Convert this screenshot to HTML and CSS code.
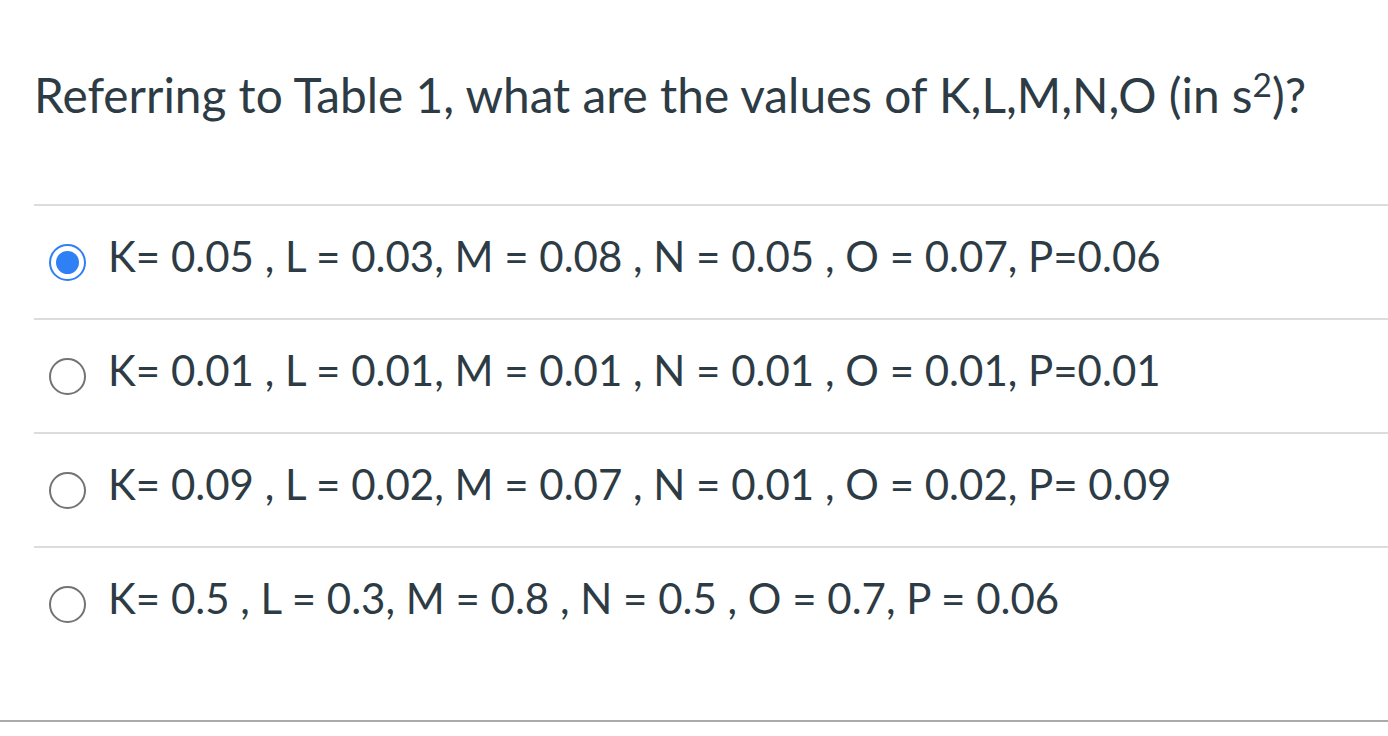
FILE: index.html
```html
<!DOCTYPE html>
<html>
<head>
<meta charset="utf-8">
<link rel="stylesheet" href="styles.css">
</head>
<body>
<div class="question">
  <div class="inner">
    <div class="title">Referring to Table 1, what are the values of K,L,M,N,O (in s<sup>2</sup>)?</div>
    <div class="answers">
      <div class="answer">
        <span class="radio checked"><span class="dot"></span></span>
        <span class="label">K= 0.05 , L = 0.03, M = 0.08 , N = 0.05 , O = 0.07, P=0.06</span>
      </div>
      <div class="answer">
        <span class="radio"></span>
        <span class="label">K= 0.01 , L = 0.01, M = 0.01 , N = 0.01 , O = 0.01, P=0.01</span>
      </div>
      <div class="answer">
        <span class="radio"></span>
        <span class="label">K= 0.09 , L = 0.02, M = 0.07 , N = 0.01 , O = 0.02, P= 0.09</span>
      </div>
      <div class="answer">
        <span class="radio"></span>
        <span class="label">K= 0.5 , L = 0.3, M = 0.8 , N = 0.5 , O = 0.7, P = 0.06</span>
      </div>
    </div>
  </div>
</div>
</body>
</html>
```
FILE: styles.css
```css
html, body {
  margin: 0;
  padding: 0;
  background: #fff;
}
body {
  font-family: Lato, "Noto Sans", sans-serif;
  color: #2d3b45;
}
.question {
  border-bottom: 2px solid #aaaaaa;
  padding-bottom: 60px;
}
.inner {
  padding-left: 34px;
}
.title {
  font-size: 47.8px;
  line-height: 58px;
  padding-top: 66px;
  margin-bottom: 80px;
  white-space: nowrap;
}
.title sup {
  font-size: 0.7em;
  line-height: 0;
  vertical-align: 0.48em;
}
.answer {
  display: flex;
  align-items: center;
  height: 112px;
  border-top: 2px solid #dcdcdc;
  padding-left: 15px;
}
.radio {
  box-sizing: border-box;
  width: 37px;
  height: 37px;
  border-radius: 50%;
  border: 2px solid #737373;
  display: flex;
  align-items: center;
  justify-content: center;
  flex: none;
}
.radio.checked {
  border-color: #2f7ff5;
}
.dot {
  width: 23px;
  height: 23px;
  border-radius: 50%;
  background: #2f7ff5;
}
.label {
  font-size: 42px;
  line-height: 50px;
  padding-bottom: 13px;
  margin-left: 22px;
  white-space: nowrap;
}
```
